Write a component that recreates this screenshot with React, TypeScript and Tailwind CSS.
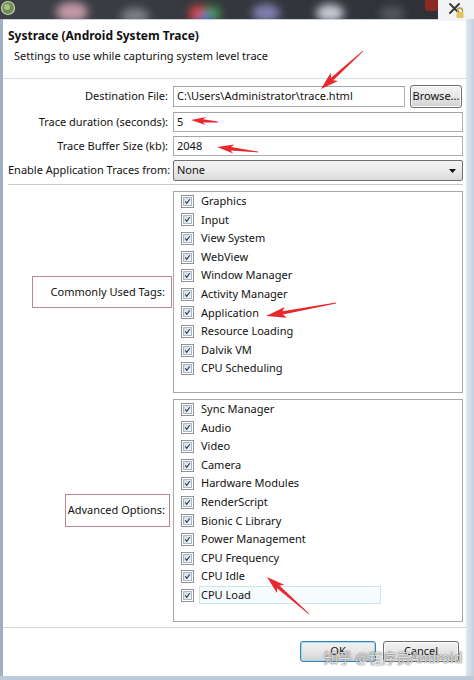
import type { ReactNode } from "react";

const commonTags = [
  "Graphics",
  "Input",
  "View System",
  "WebView",
  "Window Manager",
  "Activity Manager",
  "Application",
  "Resource Loading",
  "Dalvik VM",
  "CPU Scheduling",
];

const advancedTags = [
  "Sync Manager",
  "Audio",
  "Video",
  "Camera",
  "Hardware Modules",
  "RenderScript",
  "Bionic C Library",
  "Power Management",
  "CPU Frequency",
  "CPU Idle",
  "CPU Load",
];

// red brush arrows scribbled over the screenshot: [tailX, tailY, tipX, tipY, head, wing]
const arrows: [number, number, number, number, number, number][] = [
  [363, 51, 321, 89, 15, 5.5],
  [218, 122, 191, 120, 12, 4],
  [258, 152, 217, 147, 14, 4.5],
  [336, 303, 266, 316, 17, 5.5],
  [309, 614, 267, 577, 15, 5.5],
];

function arrowPoints([x1, y1, x2, y2, head, wing]: [number, number, number, number, number, number]) {
  const dx = x2 - x1;
  const dy = y2 - y1;
  const len = Math.hypot(dx, dy);
  const ux = dx / len;
  const uy = dy / len;
  const nx = -uy;
  const ny = ux;
  const bx = x2 - ux * head;
  const by = y2 - uy * head;
  const pts = [
    [x1 + nx * 0.4, y1 + ny * 0.4],
    [bx + nx * 1.7, by + ny * 1.7],
    [bx - ux * 3 + nx * wing, by - uy * 3 + ny * wing],
    [x2, y2],
    [bx - ux * 3 - nx * wing, by - uy * 3 - ny * wing],
    [bx - nx * 1.7, by - ny * 1.7],
    [x1 - nx * 0.4, y1 - ny * 0.4],
  ];
  return pts.map((p) => `${p[0].toFixed(1)},${p[1].toFixed(1)}`).join(" ");
}

function DesktopStrip() {
  return (
    <div className="relative h-[19px] w-full">
      <svg width="474" height="19" className="block">
        <defs>
          <filter id="soft" x="-50%" y="-50%" width="200%" height="200%">
            <feGaussianBlur stdDeviation="4" />
          </filter>
          <linearGradient id="desk" x1="0" y1="0" x2="1" y2="0">
            <stop offset="0" stopColor="#3d4047" />
            <stop offset="0.5" stopColor="#34373e" />
            <stop offset="1" stopColor="#2e3036" />
          </linearGradient>
        </defs>
        <rect width="474" height="19" fill="url(#desk)" />
        <g filter="url(#soft)">
          <ellipse cx="72" cy="12" rx="16" ry="10" fill="#c49aa8" />
          <ellipse cx="135" cy="16" rx="14" ry="8" fill="#7f7f86" />
          <ellipse cx="198" cy="14" rx="9" ry="9" fill="#d9423a" />
          <ellipse cx="212" cy="14" rx="8" ry="8" fill="#4a9a48" />
          <ellipse cx="205" cy="18" rx="8" ry="5" fill="#4a78c8" />
          <ellipse cx="266" cy="13" rx="14" ry="9" fill="#8080b0" />
          <ellipse cx="330" cy="13" rx="14" ry="9" fill="#c8c8d4" />
          <ellipse cx="392" cy="14" rx="12" ry="8" fill="#55575e" />
        </g>
        <circle cx="8" cy="8" r="6.5" fill="#6f8a52" stroke="#c7d3b0" strokeWidth="1.2" />
        <circle cx="7" cy="7" r="3" fill="#a9c083" />
        <rect x="425" y="-4" width="13" height="15" rx="3" fill="#8c2a22" />
      </svg>
      <div className="absolute right-0 top-0 flex h-[21px] w-[36px] items-center justify-center bg-[#f2f3f4]">
        <svg width="20" height="18" viewBox="0 0 20 18">
          <path d="M4 2 L13 11 M13 2 L4 11" stroke="#3a3a3a" strokeWidth="2" strokeLinecap="round" />
          <path d="M11.5 10 V8.5 a2.5 2.5 0 0 1 5 0 V10" stroke="#b59a3c" strokeWidth="1.3" fill="none" />
          <rect x="10.5" y="10" width="7" height="6" rx="1" fill="#e3c45a" />
        </svg>
      </div>
    </div>
  );
}

function TextBox({ value, className = "" }: { value: string; className?: string }) {
  return (
    <div
      className={`flex items-center border border-[#abadb3] border-t-[#a1a4ab] bg-white pl-[3px] text-[11px] ${className}`}
    >
      {value}
    </div>
  );
}

function CheckBox() {
  return (
    <span className="flex h-[13px] w-[13px] shrink-0 items-center justify-center border border-[#8f949b] bg-white">
      <span className="flex h-[9px] w-[9px] items-center justify-center border border-[#aeb6c1] bg-linear-to-br from-[#d2dbe6] to-[#f6f8fb]">
        <svg width="9" height="9" viewBox="0 0 9 9" className="block">
          <path d="M1.6 4.4 L3.6 6.8 L7.4 1.6" stroke="#243657" strokeWidth="1.5" fill="none" />
        </svg>
      </span>
    </span>
  );
}

function TagGroup({ items, focused }: { items: string[]; focused?: string }) {
  return (
    <div className="flex flex-1 flex-col border border-[#a7a7a7] bg-white pl-[7px]">
      {items.map((t) => (
        <div key={t} className="flex h-[18.6px] items-center gap-[5px]">
          <CheckBox />
          <span
            className={
              t === focused
                ? "flex h-[18px] w-[182px] items-center border border-[#cfe5ee] bg-[#f6fcfe] pl-[1px]"
                : "pl-[2px]"
            }
          >
            {t}
          </span>
        </div>
      ))}
    </div>
  );
}

function NoteBox({ children, className }: { children: ReactNode; className: string }) {
  return (
    <div className={`flex items-center justify-end border border-[#b88892] bg-white ${className}`}>
      {children}
    </div>
  );
}

function Button({ label, primary }: { label: string; primary?: boolean }) {
  return (
    <div
      className={`flex h-[21px] w-[76px] items-center justify-center rounded-[3px] border bg-linear-to-b from-[#f2f2f2] via-[#e6e6e6] to-[#d2d2d2] text-[11px] ${
        primary
          ? "border-[#3c7fb1] shadow-[inset_0_0_0_1px_#a8d8f0]"
          : "border-[#707070] shadow-[inset_0_0_0_1px_#fbfbfb]"
      }`}
    >
      {label}
    </div>
  );
}

export default function App() {
  return (
    <div className="relative h-[680px] w-[474px] overflow-hidden bg-[#bccbdb] font-['Noto_Sans','Open_Sans',sans-serif] text-[11px] text-[#111]">
      <DesktopStrip />

      <div className="ml-[3px] mr-[8px] flex h-[657px] flex-col border-t border-[#c8d0d8] bg-white">
        <div className="h-[59px] border-b border-[#d6dde3] pl-[5px] pt-[7px]">
          <div className="text-[12px] font-bold leading-[18px]">Systrace (Android System Trace)</div>
          <div className="mt-[3px] pl-[6px] leading-[16px]">Settings to use while capturing system level trace</div>
        </div>

        <div className="flex flex-col pl-[5px] pr-[3px]">
          <div className="mt-[6px] flex h-[23px] items-center">
            <div className="w-[165px] pr-[5px] text-right">Destination File:</div>
            <TextBox value="C:\Users\Administrator\trace.html" className="h-[21px] w-[232px]" />
            <div className="ml-[5px] flex h-[23px] w-[52px] items-center justify-center rounded-[3px] border border-[#707070] bg-linear-to-b from-[#f2f2f2] via-[#e8e8e8] to-[#d0d0d0] shadow-[inset_0_0_0_1px_#fbfbfb]">
              Browse...
            </div>
          </div>

          <div className="mt-[4px] flex h-[20px] items-center">
            <div className="w-[165px] pr-[5px] text-right">Trace duration (seconds):</div>
            <TextBox value="5" className="h-[20px] flex-1" />
          </div>

          <div className="mt-[4px] flex h-[20px] items-center">
            <div className="w-[165px] pr-[5px] text-right">Trace Buffer Size (kb):</div>
            <TextBox value="2048" className="h-[20px] flex-1" />
          </div>

          <div className="mt-[4px] flex h-[21px] items-center">
            <div className="w-[165px] whitespace-nowrap pr-[5px] text-right">Enable Application Traces from:</div>
            <div className="flex h-[21px] flex-1 items-center justify-between rounded-[2px] border border-[#707070] bg-linear-to-b from-[#f4f4f4] via-[#ebebeb] to-[#d9d9d9] pl-[3px] pr-[6px]">
              <span>None</span>
              <svg width="7" height="4" viewBox="0 0 7 4">
                <path d="M0 0 H7 L3.5 4 Z" fill="#111" />
              </svg>
            </div>
          </div>

          <div className="mt-[3px] h-[2px] border-t border-[#c9c9c9] border-b-white" />

          <div className="mt-[5px] flex h-[202px]">
            <div className="flex w-[165px] items-center justify-end pr-px">
              <NoteBox className="h-[32px] w-[140px] pr-[6px]">Commonly Used Tags:</NoteBox>
            </div>
            <TagGroup items={commonTags} />
          </div>

          <div className="mt-[6px] flex h-[223px]">
            <div className="flex w-[165px] items-center justify-end pr-[3px]">
              <NoteBox className="h-[33px] w-[105px] pr-[4px]">Advanced Options:</NoteBox>
            </div>
            <TagGroup items={advancedTags} focused="CPU Load" />
          </div>
        </div>

        <div className="mt-[5px] flex flex-1 items-start justify-end gap-[7px] border-t border-[#d2d6da] pr-[7px] pt-[13px]">
          <Button label="OK" primary />
          <Button label="Cancel" />
        </div>
      </div>

      <div className="absolute right-0 top-[19px] h-[657px] w-[8px] bg-linear-to-r from-[#dfe7ef] to-[#c3d2e1]" />
      <div className="absolute left-0 top-[19px] h-[657px] w-[3px] bg-[#9fb0c3]" />

      <svg width="474" height="680" className="pointer-events-none absolute left-0 top-0">
        {arrows.map((a, i) => (
          <polygon key={i} points={arrowPoints(a)} fill="#e8282c" />
        ))}
      </svg>

      <div className="pointer-events-none absolute left-[324px] top-[648px] whitespace-nowrap font-['Noto_Sans_CJK_SC',sans-serif] text-[14px] leading-[18px] text-white/80 [text-shadow:0_0_1px_rgba(60,60,60,0.9),0_0_2px_rgba(60,60,60,0.5)]">
        知乎 @程序员Android
      </div>
    </div>
  );
}
